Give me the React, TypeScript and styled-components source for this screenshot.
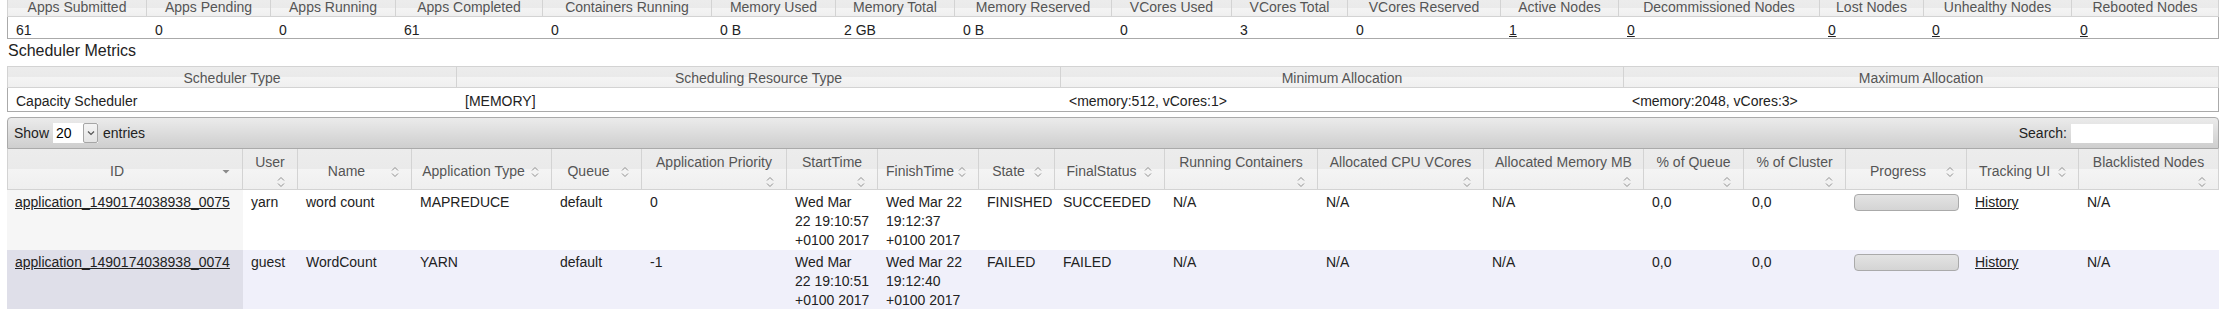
import styled, { createGlobalStyle } from 'styled-components'

const GlobalStyle = createGlobalStyle`
  html, body {
    margin: 0;
    padding: 0;
    background: #fff;
  }
  body {
    font-family: 'Liberation Sans', Arial, sans-serif;
    font-size: 14px;
    color: #222;
    overflow: hidden;
  }
  a {
    color: #222;
    text-decoration: underline;
  }
`

const headerBg = 'linear-gradient(to bottom, #ececec 0%, #eaeaea 50%, #f4f4f4 51%, #efefef 100%)'

const metrics = [
  { label: 'Apps Submitted', width: 140, value: '61' },
  { label: 'Apps Pending', width: 124, value: '0' },
  { label: 'Apps Running', width: 125, value: '0' },
  { label: 'Apps Completed', width: 147, value: '61' },
  { label: 'Containers Running', width: 169, value: '0' },
  { label: 'Memory Used', width: 124, value: '0 B' },
  { label: 'Memory Total', width: 119, value: '2 GB' },
  { label: 'Memory Reserved', width: 157, value: '0 B' },
  { label: 'VCores Used', width: 120, value: '0' },
  { label: 'VCores Total', width: 116, value: '3' },
  { label: 'VCores Reserved', width: 153, value: '0' },
  { label: 'Active Nodes', width: 118, value: '1', link: true },
  { label: 'Decommissioned Nodes', width: 201, value: '0', link: true },
  { label: 'Lost Nodes', width: 104, value: '0', link: true },
  { label: 'Unhealthy Nodes', width: 148, value: '0', link: true },
  { label: 'Rebooted Nodes', width: 147, value: '0', link: true },
]

const schedulerCols = [
  { label: 'Scheduler Type', width: 450, value: 'Capacity Scheduler' },
  { label: 'Scheduling Resource Type', width: 604, value: '[MEMORY]' },
  { label: 'Minimum Allocation', width: 563, value: '<memory:512, vCores:1>' },
  { label: 'Maximum Allocation', width: 595, value: '<memory:2048, vCores:3>' },
]

type AppColumn = {
  key: string
  label: string
  width: number
  stacked?: boolean
  sorted?: boolean
}

const appColumns: AppColumn[] = [
  { key: 'id', label: 'ID', width: 236, sorted: true },
  { key: 'user', label: 'User', width: 55, stacked: true },
  { key: 'name', label: 'Name', width: 114 },
  { key: 'type', label: 'Application Type', width: 140 },
  { key: 'queue', label: 'Queue', width: 90 },
  { key: 'priority', label: 'Application Priority', width: 145, stacked: true },
  { key: 'start', label: 'StartTime', width: 91, stacked: true },
  { key: 'finish', label: 'FinishTime', width: 101 },
  { key: 'state', label: 'State', width: 76 },
  { key: 'final', label: 'FinalStatus', width: 110 },
  { key: 'running', label: 'Running Containers', width: 153, stacked: true },
  { key: 'cpu', label: 'Allocated CPU VCores', width: 166, stacked: true },
  { key: 'mem', label: 'Allocated Memory MB', width: 160, stacked: true },
  { key: 'pq', label: '% of Queue', width: 100, stacked: true },
  { key: 'pc', label: '% of Cluster', width: 102, stacked: true },
  { key: 'progress', label: 'Progress', width: 121 },
  { key: 'tracking', label: 'Tracking UI', width: 112 },
  { key: 'blacklisted', label: 'Blacklisted Nodes', width: 140, stacked: true },
]

const apps = [
  {
    id: 'application_1490174038938_0075',
    user: 'yarn',
    name: 'word count',
    type: 'MAPREDUCE',
    queue: 'default',
    priority: '0',
    start: 'Wed Mar 22 19:10:57 +0100 2017',
    finish: 'Wed Mar 22 19:12:37 +0100 2017',
    state: 'FINISHED',
    final: 'SUCCEEDED',
    running: 'N/A',
    cpu: 'N/A',
    mem: 'N/A',
    pq: '0,0',
    pc: '0,0',
    progress: 0,
    tracking: 'History',
    blacklisted: 'N/A',
  },
  {
    id: 'application_1490174038938_0074',
    user: 'guest',
    name: 'WordCount',
    type: 'YARN',
    queue: 'default',
    priority: '-1',
    start: 'Wed Mar 22 19:10:51 +0100 2017',
    finish: 'Wed Mar 22 19:12:40 +0100 2017',
    state: 'FAILED',
    final: 'FAILED',
    running: 'N/A',
    cpu: 'N/A',
    mem: 'N/A',
    pq: '0,0',
    pc: '0,0',
    progress: 0,
    tracking: 'History',
    blacklisted: 'N/A',
  },
]

const Page = styled.div`
  width: 2220px;
  box-sizing: border-box;
  padding-left: 7px;
`

const Col = styled.col<{ $w: number }>`
  width: ${({ $w }) => $w}px;
`

const GridTable = styled.table`
  width: 2212px;
  table-layout: fixed;
  border-collapse: separate;
  border-spacing: 0;
`

const MetricHead = styled.th`
  padding: 0 4px 1px;
  line-height: 15px;
  font-weight: normal;
  color: #555;
  text-align: center;
  white-space: nowrap;
  overflow: hidden;
  background: ${headerBg};
  border-right: 1px solid #d3d3d3;
  border-bottom: 1px solid #d3d3d3;

  &:first-child {
    border-left: 1px solid #d3d3d3;
  }
`

const MetricCell = styled.td`
  padding: 5px 8px 0;
  line-height: 16px;
  white-space: nowrap;
  border-bottom: 1px solid #aaa;

  &:first-child {
    border-left: 1px solid #aaa;
  }
  &:last-child {
    border-right: 1px solid #aaa;
  }
`

const SectionTitle = styled.h3`
  margin: 2px 0 6px;
  padding-left: 1px;
  font-size: 16px;
  line-height: 19px;
  font-weight: normal;
  color: #222;
`

const SchedHead = styled.th`
  padding: 2px 8px 0;
  line-height: 18px;
  font-weight: normal;
  color: #555;
  text-align: center;
  white-space: nowrap;
  background: ${headerBg};
  border-top: 1px solid #d3d3d3;
  border-right: 1px solid #d3d3d3;
  border-bottom: 1px solid #d3d3d3;

  &:first-child {
    border-left: 1px solid #d3d3d3;
  }
`

const SchedCell = styled.td`
  padding: 5px 8px 2px;
  line-height: 16px;
  white-space: nowrap;
  border-bottom: 1px solid #aaa;

  &:first-child {
    border-left: 1px solid #aaa;
  }
  &:last-child {
    border-right: 1px solid #aaa;
  }
`

const Toolbar = styled.div`
  display: flex;
  align-items: center;
  justify-content: space-between;
  box-sizing: border-box;
  width: 2212px;
  height: 32px;
  margin-top: 5px;
  padding: 0 5px 0 6px;
  border: 1px solid #aaa;
  border-radius: 4px 4px 0 0;
  background: linear-gradient(to bottom, #ebebeb 0%, #dedede 45%, #cecece 100%);
  color: #222;
`

const ToolGroup = styled.div`
  display: flex;
  align-items: center;
  gap: 4px;
`

const LengthSelect = styled.span`
  display: inline-flex;
  align-items: stretch;
  height: 20px;
  margin: 0 1px 0 0;
  background: #fff;
`

const SelectValue = styled.span`
  width: 27px;
  padding-left: 3px;
  line-height: 20px;
  color: #000;
`

const SelectArrow = styled.span`
  display: flex;
  align-items: center;
  justify-content: center;
  box-sizing: border-box;
  width: 15px;
  border: 1px solid #a6a6a6;
  border-radius: 2px;
  background: linear-gradient(to bottom, #f4f4f4, #e4e4e4);
`

const SearchInput = styled.input`
  box-sizing: border-box;
  width: 142px;
  height: 19px;
  border: none;
  outline: none;
  padding: 0 3px;
  background: #fff;
  font: inherit;
`

const AppsHead = styled.th<{ $stacked?: boolean }>`
  height: 40px;
  box-sizing: border-box;
  padding: ${({ $stacked }) => ($stacked ? '4px 8px 0' : '5px 8px 1px')};
  vertical-align: ${({ $stacked }) => ($stacked ? 'top' : 'middle')};
  font-weight: normal;
  color: #555;
  background: ${headerBg};
  border-right: 1px solid #d3d3d3;
  border-bottom: 1px solid #d3d3d3;

  &:first-child {
    border-left: 1px solid #d3d3d3;
  }
`

const SortWrap = styled.div<{ $stacked?: boolean }>`
  display: flex;
  flex-direction: ${({ $stacked }) => ($stacked ? 'column' : 'row')};
  align-items: ${({ $stacked }) => ($stacked ? 'stretch' : 'center')};
`

const HeadLabel = styled.span`
  flex: 1;
  text-align: center;
  white-space: nowrap;
  line-height: 18px;
`

const SortIcon = styled.svg<{ $stacked?: boolean }>`
  flex: none;
  width: 16px;
  height: 16px;
  align-self: ${({ $stacked }) => ($stacked ? 'flex-end' : 'center')};
  margin-top: ${({ $stacked }) => ($stacked ? '2px' : '0')};
`

const AppRow = styled.tr<{ $even?: boolean }>`
  background: ${({ $even }) => ($even ? '#f0f0fa' : '#fff')};
`

const AppCell = styled.td<{ $sorted?: boolean; $even?: boolean }>`
  padding: 3px 8px 0;
  line-height: 19px;
  vertical-align: top;
  background: ${({ $sorted, $even }) => ($sorted ? ($even ? '#dfdfe9' : '#f6f6f6') : 'transparent')};
`

const Progress = styled.div`
  box-sizing: border-box;
  height: 17px;
  margin-top: 1px;
  border: 1px solid #aaa;
  border-radius: 4px;
  background: linear-gradient(to bottom, #e3e3e3, #d4d4d4);
  overflow: hidden;
`

const ProgressFill = styled.div`
  height: 100%;
  background: #8fb1d9;
`

const SortGlyph = ({ sorted, stacked }: { sorted?: boolean; stacked?: boolean }) => (
  <SortIcon viewBox="0 0 16 16" $stacked={stacked}>
    {sorted ? (
      <path d="M4.5 7h7L8 10.5z" fill="#8a8a8a" />
    ) : (
      <path d="M5 7.5l3-3 3 3M5 10.5l3 3 3-3" fill="none" stroke="#909090" strokeWidth="1" />
    )}
  </SortIcon>
)

const renderCell = (key: string, app: (typeof apps)[number]) => {
  if (key === 'id') return <a href="#">{app.id}</a>
  if (key === 'tracking') return <a href="#">{app.tracking}</a>
  if (key === 'progress')
    return (
      <Progress>
        <ProgressFill style={{ width: `${app.progress}%` }} />
      </Progress>
    )
  return (app as Record<string, string | number>)[key]
}

const App = () => {
  return (
    <Page>
      <GlobalStyle />
      <GridTable>
        <colgroup>
          {metrics.map((m) => (
            <Col key={m.label} $w={m.width} />
          ))}
        </colgroup>
        <thead>
          <tr>
            {metrics.map((m) => (
              <MetricHead key={m.label}>{m.label}</MetricHead>
            ))}
          </tr>
        </thead>
        <tbody>
          <tr>
            {metrics.map((m) => (
              <MetricCell key={m.label}>{m.link ? <a href="#">{m.value}</a> : m.value}</MetricCell>
            ))}
          </tr>
        </tbody>
      </GridTable>

      <SectionTitle>Scheduler Metrics</SectionTitle>
      <GridTable>
        <colgroup>
          {schedulerCols.map((c) => (
            <Col key={c.label} $w={c.width} />
          ))}
        </colgroup>
        <thead>
          <tr>
            {schedulerCols.map((c) => (
              <SchedHead key={c.label}>{c.label}</SchedHead>
            ))}
          </tr>
        </thead>
        <tbody>
          <tr>
            {schedulerCols.map((c) => (
              <SchedCell key={c.label}>{c.value}</SchedCell>
            ))}
          </tr>
        </tbody>
      </GridTable>

      <Toolbar>
        <ToolGroup>
          Show
          <LengthSelect>
            <SelectValue>20</SelectValue>
            <SelectArrow>
              <svg width="8" height="6" viewBox="0 0 8 6">
                <path d="M1 1.5l3 3 3-3" fill="none" stroke="#555" strokeWidth="1.2" />
              </svg>
            </SelectArrow>
          </LengthSelect>
          entries
        </ToolGroup>
        <ToolGroup>
          Search:
          <SearchInput type="text" />
        </ToolGroup>
      </Toolbar>

      <GridTable>
        <colgroup>
          {appColumns.map((c) => (
            <Col key={c.key} $w={c.width} />
          ))}
        </colgroup>
        <thead>
          <tr>
            {appColumns.map((c) => (
              <AppsHead key={c.key} $stacked={c.stacked}>
                <SortWrap $stacked={c.stacked}>
                  <HeadLabel>{c.label}</HeadLabel>
                  <SortGlyph sorted={c.sorted} stacked={c.stacked} />
                </SortWrap>
              </AppsHead>
            ))}
          </tr>
        </thead>
        <tbody>
          {apps.map((app, i) => (
            <AppRow key={app.id} $even={i % 2 === 1}>
              {appColumns.map((c) => (
                <AppCell key={c.key} $sorted={c.sorted} $even={i % 2 === 1}>
                  {renderCell(c.key, app)}
                </AppCell>
              ))}
            </AppRow>
          ))}
        </tbody>
      </GridTable>
    </Page>
  )
}

export default App
